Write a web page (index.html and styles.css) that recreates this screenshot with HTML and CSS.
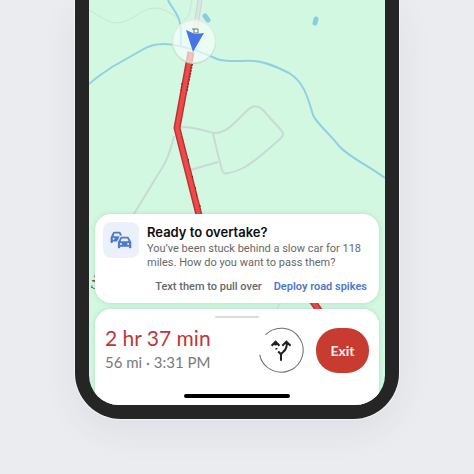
FILE: index.html
```html
<!DOCTYPE html>
<html lang="en">
<head>
<meta charset="utf-8">
<meta name="viewport" content="width=device-width, initial-scale=1">
<title>Navigation</title>
<link rel="stylesheet" href="styles.css">
</head>
<body>
<main class="phone">
  <div class="screen">
    <svg class="map" viewBox="89 0 296 405" preserveAspectRatio="xMidYMax slice" aria-hidden="true">
      <g class="road road-minor">
        <path d="M89 10C100 16 108 23 117 23C131 23 141 8 155 8C164 8 172 14 178 18"/>
        <path d="M192 0C190 8 191 16 184 20"/>
        <path d="M280 303L277 309"/>
      </g>
      <g class="road">
        <path d="M181 127C194 127 203 130 213 133C228 134 236 120 250 108Q256 104 262 109L281 130Q285 134 281 138C270 148 257 160 245 167Q236 172 228 173Q224 175 222 170L218 155L213 133"/>
        <path d="M190 170L218 162"/>
        <path d="M174 136C169 158 163 167 157 176L134 214"/>
      </g>
      <path class="highway" d="M200 0L195 32"/>
      <path class="highway-line" d="M200 0L195 32"/>
      <path class="river" d="M89 84C98 76 105 72 112 67L142 50C153 43 166 43 179 46C192 48 204 53 217 59C229 63 242 60 254 61C267 62 279 68 289 73C304 82 308 98 313 115C317 124 330 134 339 146C350 158 368 165 385 178"/>
      <path class="river" d="M168 0C171 7 178 13 180 23C182 31 180 38 181 46"/>
      <path class="pond" d="M205 16L208 20M316 19L315 23"/>
      <path class="route-edge" d="M191 52L177 128L199 215"/>
      <path class="route" d="M191 52L177 128L199 215"/>
      <path class="route-edge" d="M311 299L321 313"/>
      <path class="route" d="M311 299L321 313"/>
      <path class="ticks" d="M192.500 64L189 82M188.500 83L187 92M182 83L181 91M188.500 159V163M192.500 176V178M195.500 187V189M196.500 194V196M200 205V208"/>
      <circle class="halo-shadow" cx="194" cy="42" r="21.500"/>
      <circle class="halo" cx="194" cy="41" r="21.500"/>
      <path class="arrow" d="M186 30L195 34L204 33L193 52Z"/>
      <path class="marker" d="M192 29H194M194 29H198V33H194Z"/>
      <text class="street" x="0" y="0" transform="translate(95 290) rotate(-66)">r Mi</text>
    </svg>

    <section class="card prompt">
      <span class="badge">
        <svg class="cars" viewBox="0 0 22 18" aria-hidden="true">
          <path fill-rule="evenodd" d="M2.700 2Q3.100 .8 4.300 .8H9.300Q10.500 .8 10.900 2L11.900 4.600H9.700L9.200 2.600H4.400L3.500 5.200H9.500L8.300 8.300L7 10.500H2.800V11.300Q2.800 12 2.100 12H1.300Q.6 12 .6 11.300V6.500ZM3.600 6.800A1 1 0 1 0 3.600 8.800A1 1 0 1 0 3.600 6.800Z"/>
          <path fill-rule="evenodd" d="M10.200 6.800Q10.600 5.700 11.700 5.700H17.500Q18.600 5.700 19 6.800L21.300 11.300V16.500Q21.300 17.200 20.600 17.200H19.700Q19 17.200 19 16.500V15.700H10.200V16.500Q10.200 17.200 9.500 17.200H8.600Q7.900 17.200 7.900 16.500V11.300ZM11.800 7.500L10.600 10.200H18.600L17.400 7.500ZM10.900 12A1 1 0 1 0 10.900 14A1 1 0 1 0 10.900 12ZM18.200 12A1 1 0 1 0 18.200 14A1 1 0 1 0 18.200 12Z"/>
        </svg>
      </span>
      <div class="prompt-text">
        <h1 class="title">Ready to overtake?</h1>
        <p class="message">You’ve been stuck behind a slow car for 118 miles. How do you want to pass them?</p>
      </div>
      <div class="actions">
        <button class="action" type="button">Text them to pull over</button>
        <button class="action action-primary" type="button">Deploy road spikes</button>
      </div>
    </section>

    <section class="card trip">
      <span class="grabber"></span>
      <div class="trip-row">
        <div class="eta">
          <p class="duration">2 hr 37 min</p>
          <p class="distance">56 mi · 3:31 PM</p>
        </div>
        <button class="routes" type="button" aria-label="Alternate routes">
          <svg class="routes-icon" viewBox="0 0 44 44" aria-hidden="true">
            <path class="ring" d="M6.500 6.500A21.500 21.500 0 1 1 .6 26"/>
            <path class="fork" d="M21.500 32V26.500Q21.500 24.800 23.500 23.500Q28 20 27 13.500M22.800 17.300L26.800 13.300L30.800 17.300M12.300 17.300L16.200 13.300L20 17.300M16.200 13.500V17M16.800 19.700L17.200 21M18.800 23L21.300 25.500"/>
          </svg>
        </button>
        <button class="exit" type="button">Exit</button>
      </div>
      <span class="home"></span>
    </section>
  </div>
</main>
</body>
</html>
```
FILE: styles.css
```css
* {
  box-sizing: border-box;
}

body {
  margin: 0;
  min-height: 100vh;
  padding: 0 75px 55px;
  display: flex;
  flex-direction: column;
  background: #ebecf0;
  font-family: Inter, "Liberation Sans", sans-serif;
}

h1,
p {
  margin: 0;
}

button {
  padding: 0;
  border: 0;
  background: none;
  font: inherit;
  color: inherit;
  cursor: pointer;
}

.phone {
  flex: 1;
  display: flex;
  padding: 0 14px 14px;
  border-radius: 0 0 46px 46px;
  background: #252525;
  box-shadow: 0 0 1px 1px #f5f5f7, 0 12px 36px rgba(60, 60, 75, 0.07);
}

.screen {
  position: relative;
  flex: 1;
  display: flex;
  flex-direction: column;
  justify-content: flex-end;
  gap: 6px;
  padding: 0 6px;
  overflow: hidden;
  border-radius: 0 0 30px 30px;
  background: #d2f8e1;
}

.map {
  position: absolute;
  inset: 0;
  width: 100%;
  height: 100%;
  fill: none;
  stroke-linejoin: round;
}

.road {
  stroke: #c8dad4;
  stroke-width: 2;
}

.road-minor {
  stroke: #c3e5d2;
  stroke-width: 1;
}

.highway {
  stroke: #c9d5d6;
  stroke-width: 5;
}

.highway-line {
  stroke: #dce3e4;
  stroke-width: 3;
}

.river {
  stroke: #92cfe2;
  stroke-width: 2;
}

.pond {
  stroke: #8acddd;
  stroke-width: 5;
  stroke-linecap: round;
}

.route-edge {
  stroke: #bd3335;
  stroke-width: 7;
}

.route {
  stroke: #ee4a4a;
  stroke-width: 4;
}

.ticks {
  stroke: #7c2a2c;
  stroke-width: 1;
  stroke-dasharray: 2 1;
}

.halo-shadow {
  stroke: #c2d5ca;
  stroke-width: 1;
}

.halo {
  fill: rgba(248, 255, 251, 0.66);
  stroke: #dcebe2;
  stroke-width: 1;
}

.arrow {
  fill: #4775e8;
}

.marker {
  fill: #ffffff;
  stroke: #6b7378;
  stroke-width: 1;
}

.street {
  fill: #47504b;
  font-size: 9px;
}

.card {
  position: relative;
  background: #ffffff;
  box-shadow: 0 0 5px rgba(40, 100, 70, 0.18);
}

.prompt {
  display: grid;
  grid-template-columns: 36px 1fr;
  column-gap: 8px;
  padding: 8px 12px 8px 8px;
  border-radius: 16px;
}

.badge {
  width: 36px;
  height: 36px;
  display: grid;
  place-items: center;
  border-radius: 8px;
  background: #ebf0fb;
}

.cars {
  width: 22px;
  height: 18px;
  fill: #4d79ce;
}

.title {
  font-size: 13px;
  line-height: 20px;
  font-weight: 600;
  color: #0d0d0d;
}

.message {
  font-family: Roboto, "Liberation Sans", sans-serif;
  font-size: 11px;
  line-height: 14px;
  color: #66686a;
}

.actions {
  grid-column: 1 / -1;
  display: flex;
  justify-content: flex-end;
  gap: 12px;
  margin-top: 9px;
}

.action {
  font-family: Roboto, "Liberation Sans", sans-serif;
  font-size: 11px;
  line-height: 16px;
  font-weight: 500;
  color: #66686a;
}

.action-primary {
  font-weight: 600;
  color: #4d79ce;
}

.trip {
  display: flex;
  flex-direction: column;
  align-items: center;
  padding: 7px 10px 7px;
  border-radius: 16px 16px 0 0;
}

.grabber {
  width: 44px;
  height: 2px;
  border-radius: 1px;
  background: #dcd9dc;
}

.trip-row {
  align-self: stretch;
  display: flex;
  align-items: center;
  margin-top: 8px;
}

.eta {
  flex: 1;
  font-family: Lato, "Open Sans", sans-serif;
}

.duration {
  font-size: 21px;
  line-height: 24px;
  color: #bf3632;
}

.distance {
  font-size: 15px;
  line-height: 24px;
  color: #7a7a7a;
}

.routes,
.exit {
  height: 45px;
}

.routes {
  width: 45px;
  margin-right: 12px;
}

.routes-icon {
  display: block;
  width: 45px;
  height: 45px;
  fill: none;
  overflow: visible;
}

.ring {
  stroke: #6c6c6c;
  stroke-width: 1;
}

.fork {
  stroke: #202124;
  stroke-width: 2;
}

.exit {
  width: 53px;
  border-radius: 22px;
  background: #c83b30;
  font-family: Lato, "Open Sans", sans-serif;
  font-size: 14px;
  font-weight: 700;
  color: #fdeeed;
}

.home {
  width: 106px;
  height: 4px;
  margin-top: 20px;
  border-radius: 2px;
  background: #000000;
}
```
